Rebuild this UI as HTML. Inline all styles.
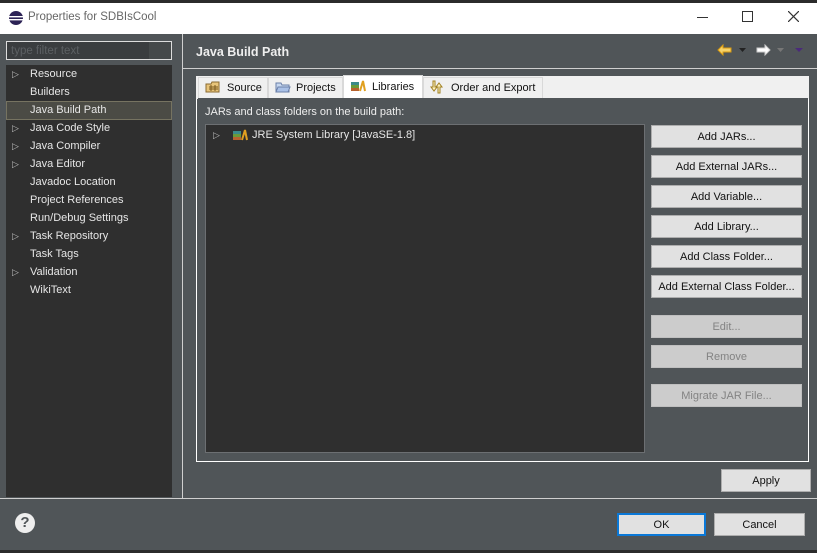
<!DOCTYPE html>
<html><head><style>
*{margin:0;padding:0;box-sizing:border-box}
body{width:817px;height:553px;background:#505558;font-family:"Liberation Sans",sans-serif;font-size:11px;position:relative;overflow:hidden;color:#ddd;white-space:nowrap}
.a{position:absolute}
.btn{position:absolute;left:651px;width:151px;height:23px;background:#e1e1e1;border:1px solid #adadad;color:#111;text-align:center;line-height:22px;font-size:11px}
.dis{background:#cccccc;border-color:#bfbfbf;color:#838383}
.tree div{position:absolute;left:24px;font-size:11px;color:#e6e6e6}
.tri{position:absolute;left:6px;color:#bbb;font-size:9px}
.tab{position:absolute;top:77px;height:21px;background:#f0f0f0;border:1px solid #d9d9d9;border-bottom:none;color:#111;line-height:21px;font-size:11px}
</style></head><body>
<div class="a" style="left:0;top:0;width:817px;height:3px;background:#2b2b2b"></div>
<div class="a" style="left:0;top:3px;width:817px;height:31px;background:#fff"></div>
<svg class="a" style="left:8px;top:10px" width="16" height="16" viewBox="0 0 16 16"><circle cx="8" cy="8" r="7" fill="#2c2255"/><rect x="1" y="6" width="14" height="1.4" fill="#fff"/><rect x="1" y="9" width="14" height="1.4" fill="#fff"/></svg>
<div class="a" style="left:28px;top:11px;color:#666;font-size:11.5px">Properties for SDBIsCool</div>
<div class="a" style="left:697px;top:17px;width:11px;height:1px;background:#333"></div>
<div class="a" style="left:742px;top:11px;width:11px;height:11px;border:1px solid #333"></div>
<svg class="a" style="left:788px;top:11px" width="11" height="11"><path d="M0 0L11 11M11 0L0 11" stroke="#333" stroke-width="1.2"/></svg>

<div class="a" style="left:6px;top:41px;width:166px;height:19px;border:1px solid #ddd;background:#45494a"><div style="position:absolute;left:0;top:0;width:142px;height:17px;background:#3a3d3f;color:#5c6063;padding-left:4px;line-height:18px;font-size:11.5px">type filter text</div></div>
<div class="a tree" style="left:6px;top:65px;width:166px;height:432px;background:#2f2f2f">
<span class="tri" style="top:4px">&#9655;</span><div style="top:3px">Resource</div>
<div style="top:21px">Builders</div>
<div style="top:36px;left:0;width:166px;height:19px;background:#4b4b45;border:1px solid #767361"></div>
<div style="top:39px">Java Build Path</div>
<span class="tri" style="top:58px">&#9655;</span><div style="top:57px">Java Code Style</div>
<span class="tri" style="top:76px">&#9655;</span><div style="top:75px">Java Compiler</div>
<span class="tri" style="top:94px">&#9655;</span><div style="top:93px">Java Editor</div>
<div style="top:111px">Javadoc Location</div>
<div style="top:129px">Project References</div>
<div style="top:147px">Run/Debug Settings</div>
<span class="tri" style="top:166px">&#9655;</span><div style="top:165px">Task Repository</div>
<div style="top:183px">Task Tags</div>
<span class="tri" style="top:202px">&#9655;</span><div style="top:201px">Validation</div>
<div style="top:219px">WikiText</div>
</div>
<div class="a" style="left:182px;top:34px;width:1px;height:464px;background:#cfcfcf"></div>

<div class="a" style="left:196px;top:45px;font-weight:bold;font-size:12.5px;color:#eee">Java Build Path</div>
<div class="a" style="left:183px;top:68px;width:634px;height:1px;background:#cfcfcf"></div>
<svg class="a" style="left:717px;top:44px" width="16" height="12"><path d="M1 6L6 1v3h8v4H6v3z" fill="#f7d36a" stroke="#d99a10"/></svg>
<svg class="a" style="left:739px;top:48px" width="8" height="5"><path d="M0 0h7L3.5 4z" fill="#222"/></svg>
<svg class="a" style="left:755px;top:44px" width="16" height="12"><path d="M15 6L10 1v3H2v4h8v3z" fill="#fff" stroke="#ccc"/></svg>
<svg class="a" style="left:777px;top:48px" width="8" height="5"><path d="M0 0h7L3.5 4z" fill="#777"/></svg>
<svg class="a" style="left:795px;top:48px" width="9" height="5"><path d="M0 0h8L4 4z" fill="#4a2a7a"/></svg>

<div class="a" style="left:196px;top:76px;width:613px;height:386px;border:1px solid #fff;border-top:none"></div>
<div class="a" style="left:196px;top:76px;width:613px;height:23px;background:#f0f0f0"></div>
<div class="tab" style="left:198px;width:70px;padding-left:28px">Source</div>
<svg class="a" style="left:205px;top:80px" width="16" height="14"><path d="M1 4h5l1-2h7v10H1z" fill="#e8c47a" stroke="#8a6a30"/><path d="M6 5v6M10 5v6M4 7h9M4 9h9" stroke="#7a5a20"/></svg>
<div class="tab" style="left:268px;width:75px;padding-left:27px">Projects</div>
<svg class="a" style="left:275px;top:80px" width="16" height="14"><path d="M1 3h5l1 2h7v7H1z" fill="#c8d8f0" stroke="#6a7fa8"/><path d="M3 7h12l-2 5H1z" fill="#a9c0e6" stroke="#6a7fa8"/></svg>
<div class="tab" style="left:343px;top:75px;height:24px;width:80px;background:#fff;padding-left:28px;line-height:22px">Libraries</div>
<svg class="a" style="left:350px;top:79px" width="16" height="14"><rect x="1" y="3" width="8" height="3" fill="#3b8a8a"/><rect x="1" y="6" width="8" height="3" fill="#6a9a3a"/><rect x="1" y="9" width="8" height="3" fill="#b7622e"/><path d="M10 12L13 2l2 10" stroke="#e0a020" stroke-width="2" fill="none"/></svg>
<div class="tab" style="left:423px;width:120px;padding-left:27px">Order and Export</div>
<svg class="a" style="left:429px;top:80px" width="16" height="14"><path d="M4 1v6H2l3 4 3-4H6V1z" fill="#fff3c0" stroke="#a08020"/><path d="M11 13V7h2l-3-4-3 4h2v6z" fill="#fff3c0" stroke="#a08020"/></svg>

<div class="a" style="left:198px;top:98px;width:610px;height:362px;background:#505558"></div>
<div class="a" style="left:205px;top:106px;color:#eee">JARs and class folders on the build path:</div>
<div class="a" style="left:205px;top:124px;width:440px;height:329px;background:#2f2f2f;border:1px solid #6c6f72"></div>
<div class="a" style="left:213px;top:130px;color:#bbb;font-size:9px">&#9655;</div>
<svg class="a" style="left:232px;top:128px" width="16" height="14"><rect x="1" y="3" width="8" height="3" fill="#3b8a8a"/><rect x="1" y="6" width="8" height="3" fill="#6a9a3a"/><rect x="1" y="9" width="8" height="3" fill="#b7622e"/><path d="M10 12L13 2l2 10" stroke="#e0a020" stroke-width="2" fill="none"/></svg>
<div class="a" style="left:252px;top:129px;color:#e6e6e6">JRE System Library [JavaSE-1.8]</div>

<div class="btn" style="top:125px">Add JARs...</div>
<div class="btn" style="top:155px">Add External JARs...</div>
<div class="btn" style="top:185px">Add Variable...</div>
<div class="btn" style="top:215px">Add Library...</div>
<div class="btn" style="top:245px">Add Class Folder...</div>
<div class="btn" style="top:275px">Add External Class Folder...</div>
<div class="btn dis" style="top:315px">Edit...</div>
<div class="btn dis" style="top:345px">Remove</div>
<div class="btn dis" style="top:384px">Migrate JAR File...</div>

<div class="btn" style="left:721px;top:469px;width:90px">Apply</div>
<div class="a" style="left:0;top:498px;width:817px;height:1px;background:#cfcfcf"></div>
<div class="a" style="left:15px;top:513px;width:20px;height:20px;border-radius:50%;background:#eee;color:#505558;font-weight:bold;text-align:center;line-height:20px;font-size:15px">?</div>
<div class="btn" style="left:617px;top:513px;width:89px;border:2px solid #0a78d7;line-height:20px">OK</div>
<div class="btn" style="left:714px;top:513px;width:91px">Cancel</div>
<div class="a" style="left:0;top:550px;width:817px;height:3px;background:#2b2b2b"></div>
</body></html>
